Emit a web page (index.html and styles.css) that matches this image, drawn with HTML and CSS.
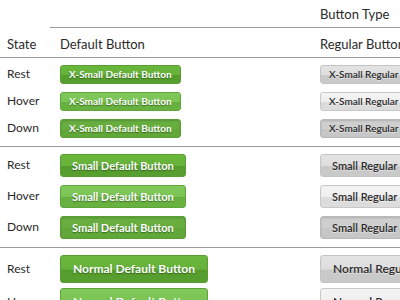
FILE: index.html
```html
<!DOCTYPE html>
<html>
<head>
<meta charset="utf-8">
<link rel="stylesheet" href="styles.css">
</head>
<body>
<div class="sheet">
  <div class="head-top">
    <div class="type-title">Button Type</div>
  </div>
  <div class="head-row">
    <div class="c-state">State</div>
    <div class="c-default">Default Button</div>
    <div class="c-regular">Regular Button</div>
  </div>

  <div class="group g-xs">
    <div class="row">
      <div class="c-state">Rest</div>
      <div class="c-default"><span class="btn green">X-Small Default Button</span></div>
      <div class="c-regular"><span class="btn gray">X-Small Regular Button</span></div>
    </div>
    <div class="row">
      <div class="c-state">Hover</div>
      <div class="c-default"><span class="btn green hover">X-Small Default Button</span></div>
      <div class="c-regular"><span class="btn gray hover">X-Small Regular Button</span></div>
    </div>
    <div class="row">
      <div class="c-state">Down</div>
      <div class="c-default"><span class="btn green down">X-Small Default Button</span></div>
      <div class="c-regular"><span class="btn gray down">X-Small Regular Button</span></div>
    </div>
  </div>

  <div class="group g-sm">
    <div class="row">
      <div class="c-state">Rest</div>
      <div class="c-default"><span class="btn green">Small Default Button</span></div>
      <div class="c-regular"><span class="btn gray">Small Regular Button</span></div>
    </div>
    <div class="row">
      <div class="c-state">Hover</div>
      <div class="c-default"><span class="btn green hover">Small Default Button</span></div>
      <div class="c-regular"><span class="btn gray hover">Small Regular Button</span></div>
    </div>
    <div class="row">
      <div class="c-state">Down</div>
      <div class="c-default"><span class="btn green down">Small Default Button</span></div>
      <div class="c-regular"><span class="btn gray down">Small Regular Button</span></div>
    </div>
  </div>

  <div class="group g-md">
    <div class="row">
      <div class="c-state">Rest</div>
      <div class="c-default"><span class="btn green">Normal Default Button</span></div>
      <div class="c-regular"><span class="btn gray">Normal Regular Button</span></div>
    </div>
    <div class="row">
      <div class="c-state">Hover</div>
      <div class="c-default"><span class="btn green hover">Normal Default Button</span></div>
      <div class="c-regular"><span class="btn gray hover">Normal Regular Button</span></div>
    </div>
  </div>
</div>
</body>
</html>
```
FILE: styles.css
```css
html, body {
  margin: 0;
  padding: 0;
  background: #fff;
  overflow: hidden;
}
body {
  font-family: Lato, "Open Sans", sans-serif;
  color: #2a2a2a;
  width: 400px;
  height: 300px;
}
.sheet {
  width: 560px;
}
.head-top {
  height: 28px;
  margin-left: 50px;
  border-bottom: 1px solid #9a9a9a;
  padding-left: 270px;
  padding-top: 1px;
  box-sizing: border-box;
  display: flex;
  align-items: center;
  font-size: 13px;
}
.head-row, .row {
  display: grid;
  grid-template-columns: 50px 270px 1fr;
  align-items: center;
}
.head-row {
  height: 30px;
  border-bottom: 1px solid #9a9a9a;
  box-sizing: border-box;
  font-size: 13px;
  padding-top: 3px;
}
.c-state {
  padding-left: 7px;
}
.c-default {
  padding-left: 10px;
}
.row .c-default, .row .c-regular {
  display: flex;
  align-items: center;
}
.group {
  display: flex;
  flex-direction: column;
  padding: 7px 0 8px;
  border-bottom: 1px solid #9a9a9a;
}
.row .c-state {
  font-size: 12px;
  line-height: 14px;
  padding-bottom: 1px;
}
.g-xs { gap: 8px; }
.g-sm { gap: 8px; }
.g-md { gap: 5px; }

.btn {
  display: block;
  box-sizing: border-box;
  border-radius: 3px;
  font-weight: 700;
  white-space: nowrap;
}
.g-xs .btn {
  height: 19px;
  line-height: 17px;
  font-size: 10px;
  padding: 0 8px;
}
.g-sm .btn {
  height: 23px;
  line-height: 21px;
  font-size: 11px;
  padding: 0 11px;
}
.g-md .btn {
  height: 28px;
  line-height: 26px;
  font-size: 12px;
  padding: 0 12px;
}
.btn.green {
  color: #fff;
  text-shadow: 0 1px 1px rgba(30, 70, 10, 0.6);
  border: 1px solid #5a9e33;
  background: linear-gradient(#6ab73c 0%, #66b23a 50%, #559c2d 55%, #579f2f 100%);
}
.btn.green.hover {
  border-color: #5fa638;
  background: linear-gradient(#80c95a 0%, #7bc454 50%, #67b040 55%, #69b242 100%);
}
.btn.green.down {
  border-color: #5a9e35;
  background: linear-gradient(#67ae3f 0%, #67ae3f 50%, #62a73a 55%, #62a73a 100%);
  box-shadow: inset 0 1px 2px rgba(0, 0, 0, 0.15);
}
.btn.gray {
  color: #2a2a2a;
  font-weight: 600;
  text-shadow: 0 1px 0 rgba(255, 255, 255, 0.5);
  border: 1px solid #c4c4c4;
  background: linear-gradient(#e3e3e3 0%, #dedede 50%, #c9c9c9 55%, #c9c9c9 100%);
}
.btn.gray.hover {
  border-color: #c8c8c8;
  background: linear-gradient(#f3f3f3 0%, #efefef 50%, #dcdcdc 55%, #dcdcdc 100%);
}
.btn.gray.down {
  border-color: #b9b9b9;
  background: linear-gradient(#cfcfcf 0%, #cfcfcf 50%, #c7c7c7 55%, #c7c7c7 100%);
  box-shadow: inset 0 1px 2px rgba(0, 0, 0, 0.15);
}
```
